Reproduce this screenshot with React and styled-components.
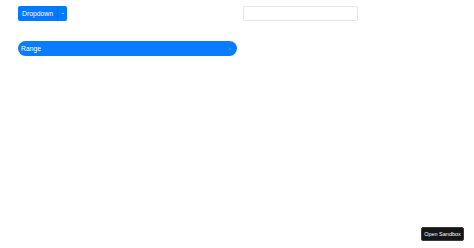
import styled, { createGlobalStyle } from 'styled-components';

const Global = createGlobalStyle`
    html, body {
        margin: 0;
        background: #ffffff;
        font-family: 'Liberation Sans', Arial, sans-serif;
    }
`;

export default function App() {
    return (
        <>
            <Global />
            <Page>
                <Row>
                    <Left>
                        <SplitButton>
                            <MainPart>Dropdown</MainPart>
                            <CaretPart><Caret /></CaretPart>
                        </SplitButton>
                    </Left>
                    <Field type="text" />
                </Row>
                <RangeBar>
                    <span>Range</span>
                    <Thumb />
                </RangeBar>
            </Page>
            <SandboxButton>Open Sandbox</SandboxButton>
        </>
    );
}

const Page = styled.div`
    padding: 6px 18px;
    display: flex;
    flex-direction: column;
    gap: 20px;
`;

const Row = styled.div`
    display: flex;
    align-items: flex-start;
`;

const Left = styled.div`
    width: 225px;
    display: flex;
`;

const SplitButton = styled.div`
    display: flex;
    height: 15px;
    border-radius: 2px;
    overflow: hidden;
    background: #007bff;
    color: #ffffff;
    font-size: 6.8px;
    line-height: 15px;
`;

const MainPart = styled.div`
    display: flex;
    align-items: center;
    justify-content: center;
    width: 39px;
    border-right: 1px solid #0069d9;
`;

const CaretPart = styled.div`
    width: 9px;
    display: flex;
    align-items: center;
    justify-content: center;
`;

const Caret = styled.span`
    width: 0;
    height: 0;
    border-left: 1.6px solid transparent;
    border-right: 1.6px solid transparent;
    border-top: 1.8px solid #ffffff;
`;

const Field = styled.input`
    display: block;
    box-sizing: border-box;
    width: 115px;
    height: 15px;
    margin: 0;
    padding: 0 4px;
    border: 1px solid #e4e6e8;
    border-radius: 2px;
    background: #ffffff;
    outline: none;
`;

const RangeBar = styled.div`
    box-sizing: border-box;
    width: 219px;
    height: 15px;
    border-radius: 8px;
    background: #0a7cff;
    color: #ffffff;
    font-size: 6.8px;
    display: flex;
    align-items: center;
    justify-content: space-between;
    padding: 0 6px 0 3px;
`;

const Thumb = styled.span`
    width: 2px;
    height: 2px;
    border-radius: 50%;
    background: #3d95ff;
`;

const SandboxButton = styled.div`
    position: fixed;
    right: 10px;
    bottom: 7px;
    width: 43px;
    height: 14px;
    box-sizing: border-box;
    background: #151515;
    border: 1px solid #3a3a3a;
    border-radius: 2px;
    color: #ffffff;
    font-size: 5.5px;
    display: flex;
    align-items: center;
    justify-content: center;
`;
